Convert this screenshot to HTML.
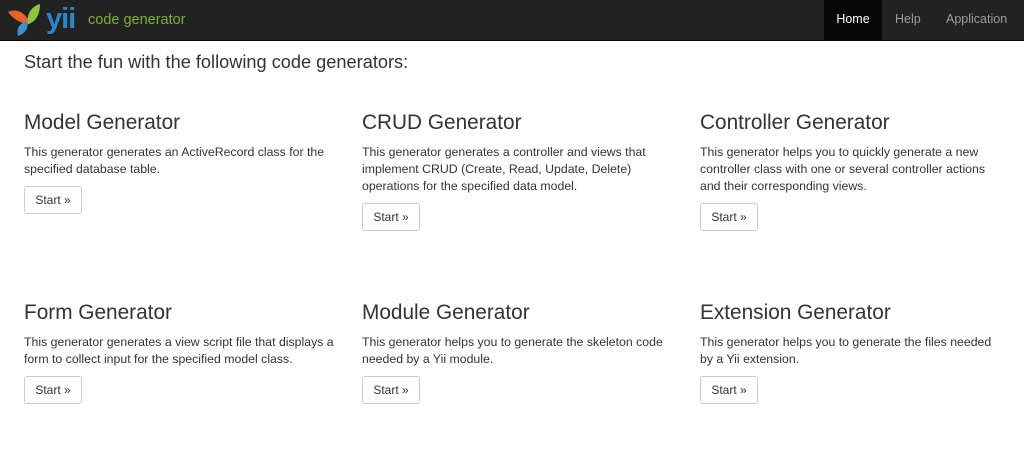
<!DOCTYPE html>
<html><head><meta charset="utf-8"><style>
*{margin:0;padding:0;box-sizing:border-box}
body{width:1024px;height:454px;background:#fff;font-family:"Liberation Sans",sans-serif;color:#333;position:relative;overflow:hidden}
.nav{position:absolute;left:0;top:0;width:1024px;height:41px;background:#222;border-bottom:1px solid #080808}
.nav a{position:absolute;top:0;height:40px;line-height:39px;font-size:12.5px;color:#9d9d9d;text-decoration:none}
.nav .act{background:#080808;color:#fff}
.lead{position:absolute;left:24px;top:52px;font-size:18.2px;color:#333}
.col{position:absolute;width:310px}
h2{font-size:20.8px;font-weight:normal;line-height:26px;margin-bottom:8px}
p{font-size:12.3px;line-height:17px;margin-bottom:8px}
.btn{display:inline-block;border:1px solid #ccc;border-radius:3px;width:58px;text-align:center;height:28px;line-height:26px;font-size:12px;color:#333}
</style></head><body>
<div class="nav">
<svg style="position:absolute;left:6px;top:2px" width="38" height="38" viewBox="0 0 38 38">
<path d="M2 10 C10 6 20 10 24 22 C16 22 8 18 2 10Z" fill="#e8632a"/>
<path d="M12 34 C10 26 14 20 22 20 C22 28 18 32 12 34Z" fill="#3d8fd1"/>
<path d="M22 22 C20 12 26 4 34 2 C34 12 30 20 22 22Z" fill="#8cc63f"/>
</svg>
<span style="position:absolute;left:46px;top:3px;font-size:29px;font-weight:bold;color:#2b86c9;letter-spacing:-1px">yii</span>
<span style="position:absolute;left:88px;top:12px;font-size:14.5px;color:#7ab03c">code generator</span>
<a class="act" style="left:824px;width:58px;text-align:center">Home</a>
<a style="left:895px">Help</a>
<a style="left:946px">Application</a>
</div>
<div class="lead">Start the fun with the following code generators:</div>

<div class="col" style="left:24px;top:110px"><h2>Model Generator</h2><p>This generator generates an ActiveRecord class for the specified database table.</p><span class="btn">Start »</span></div>
<div class="col" style="left:362px;top:110px"><h2>CRUD Generator</h2><p>This generator generates a controller and views that implement CRUD (Create, Read, Update, Delete) operations for the specified data model.</p><span class="btn">Start »</span></div>
<div class="col" style="left:700px;top:110px;width:306px"><h2>Controller Generator</h2><p>This generator helps you to quickly generate a new controller class with one or several controller actions and their corresponding views.</p><span class="btn">Start »</span></div>

<div class="col" style="left:24px;top:300px"><h2>Form Generator</h2><p>This generator generates a view script file that displays a form to collect input for the specified model class.</p><span class="btn">Start »</span></div>
<div class="col" style="left:362px;top:300px"><h2>Module Generator</h2><p>This generator helps you to generate the skeleton code needed by a Yii module.</p><span class="btn">Start »</span></div>
<div class="col" style="left:700px;top:300px;width:306px"><h2>Extension Generator</h2><p>This generator helps you to generate the files needed by a Yii extension.</p><span class="btn">Start »</span></div>
</body></html>
